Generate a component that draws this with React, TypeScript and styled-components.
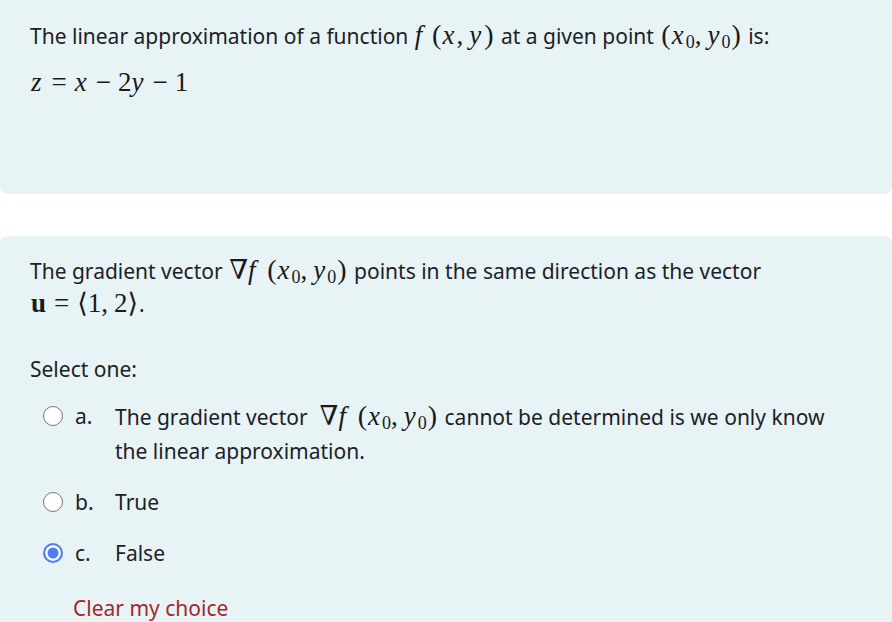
import React from 'react'
import styled, { createGlobalStyle } from 'styled-components'

const GlobalStyle = createGlobalStyle`
  body {
    margin: 0;
    background: #ffffff;
    font-family: 'Noto Sans', 'Open Sans', sans-serif;
    color: #1d2125;
  }
`

const Page = styled.div`
  display: flex;
  flex-direction: column;
  gap: 42px;
  width: 892px;
`

const Card = styled.div<{ $flatTop?: boolean }>`
  background: #e7f3f5;
  border-radius: ${({ $flatTop }) => ($flatTop ? '0 0 8px 8px' : '8px')};
  padding: ${({ $flatTop }) => ($flatTop ? '20px 30px' : '18px 30px 24px')};
  min-height: ${({ $flatTop }) => ($flatTop ? '154px' : '0')};
  font-size: 21px;
`

const Para = styled.p<{ $lh?: number; $mb?: number }>`
  margin: 0 0 ${({ $mb }) => $mb ?? 0}px;
  line-height: ${({ $lh }) => $lh ?? 30}px;
`

const M = styled.span`
  font-family: 'Liberation Serif', 'DejaVu Serif', serif;
  font-size: 27px;
  white-space: nowrap;
  color: #1a1a1a;
  margin: 0 1px;
`

const I = styled.i`
  font-style: italic;
  padding-right: 2px;
`

const Sub = styled.sub`
  font-size: 18px;
  vertical-align: -4px;
  line-height: 0;
`

const Paren = styled.span`
  font-size: 28px;
  font-weight: 300;
  margin: 0 1px;
`

const Op = styled.span<{ $space: number }>`
  margin: 0 ${({ $space }) => $space}px;
`

const Comma = styled.span`
  margin-right: 6px;
`

const Bold = styled.b`
  font-weight: 700;
`

const Options = styled.div`
  display: flex;
  flex-direction: column;
  gap: 17px;
  margin: 0 0 0 13px;
`

const Option = styled.label`
  display: grid;
  grid-template-columns: 20px 28px 1fr;
  column-gap: 12px;
  align-items: start;
  line-height: 34px;
`

const Radio = styled.span<{ $checked?: boolean }>`
  box-sizing: border-box;
  width: 20px;
  height: 20px;
  margin-top: 7px;
  border-radius: 50%;
  background: ${({ $checked }) => ($checked ? '#4f7df4' : '#ffffff')};
  border: ${({ $checked }) => ($checked ? '2px solid #4f7df4' : '1.5px solid #767676')};
  box-shadow: ${({ $checked }) => ($checked ? 'inset 0 0 0 2.5px #ffffff' : 'none')};
`

const Letter = styled.span`
  color: #1d2125;
`

const Text = styled.span`
  padding-right: 28px;
`

const ClearLink = styled.a`
  display: block;
  margin: 23px 0 0 43px;
  color: #a3282c;
  text-decoration: none;
  line-height: 30px;
`

const options = [
  { key: 'a', checked: false },
  { key: 'b', checked: false },
  { key: 'c', checked: true },
]

const Point = () => (
  <M>
    <Paren>(</Paren>
    <I>x</I>
    <Sub>0</Sub>
    <Comma>,</Comma>
    <I>y</I>
    <Sub>0</Sub>
    <Paren>)</Paren>
  </M>
)

const Grad = () => (
  <M>
    ∇<I>f</I>&nbsp;
  </M>
)

export default function App() {
  const texts: Record<string, React.ReactNode> = {
    a: (
      <>
        The gradient vector&nbsp; <Grad />
        <Point /> cannot be determined is we only know the linear approximation.
      </>
    ),
    b: 'True',
    c: 'False',
  }

  return (
    <>
      <GlobalStyle />
      <Page>
        <Card $flatTop>
          <Para $mb={16}>
            The linear approximation of a function{' '}
            <M>
              <I>f</I>&nbsp;<Paren>(</Paren>
              <I>x</I>
              <Comma>,</Comma>
              <I>y</I>
              <Paren>)</Paren>
            </M>{' '}
            at a given point <Point /> is:
          </Para>
          <Para>
            <M>
              <I>z</I>
              <Op $space={8}>=</Op>
              <I>x</I>
              <Op $space={7}>−</Op>2<I>y</I>
              <Op $space={7}>−</Op>1
            </M>
          </Para>
        </Card>
        <Card>
          <Para $lh={32} $mb={34}>
            The gradient vector <Grad />
            <Point /> points in the same direction as the vector
            <br />
            <M>
              <Bold>u</Bold>
              <Op $space={8}>=</Op>⟨1<Comma>,</Comma>2⟩
            </M>
            .
          </Para>
          <Para $mb={15}>Select one:</Para>
          <Options>
            {options.map((o) => (
              <Option key={o.key}>
                <Radio $checked={o.checked} />
                <Letter>{o.key}.</Letter>
                <Text>{texts[o.key]}</Text>
              </Option>
            ))}
          </Options>
          <ClearLink href="#">Clear my choice</ClearLink>
        </Card>
      </Page>
    </>
  )
}
